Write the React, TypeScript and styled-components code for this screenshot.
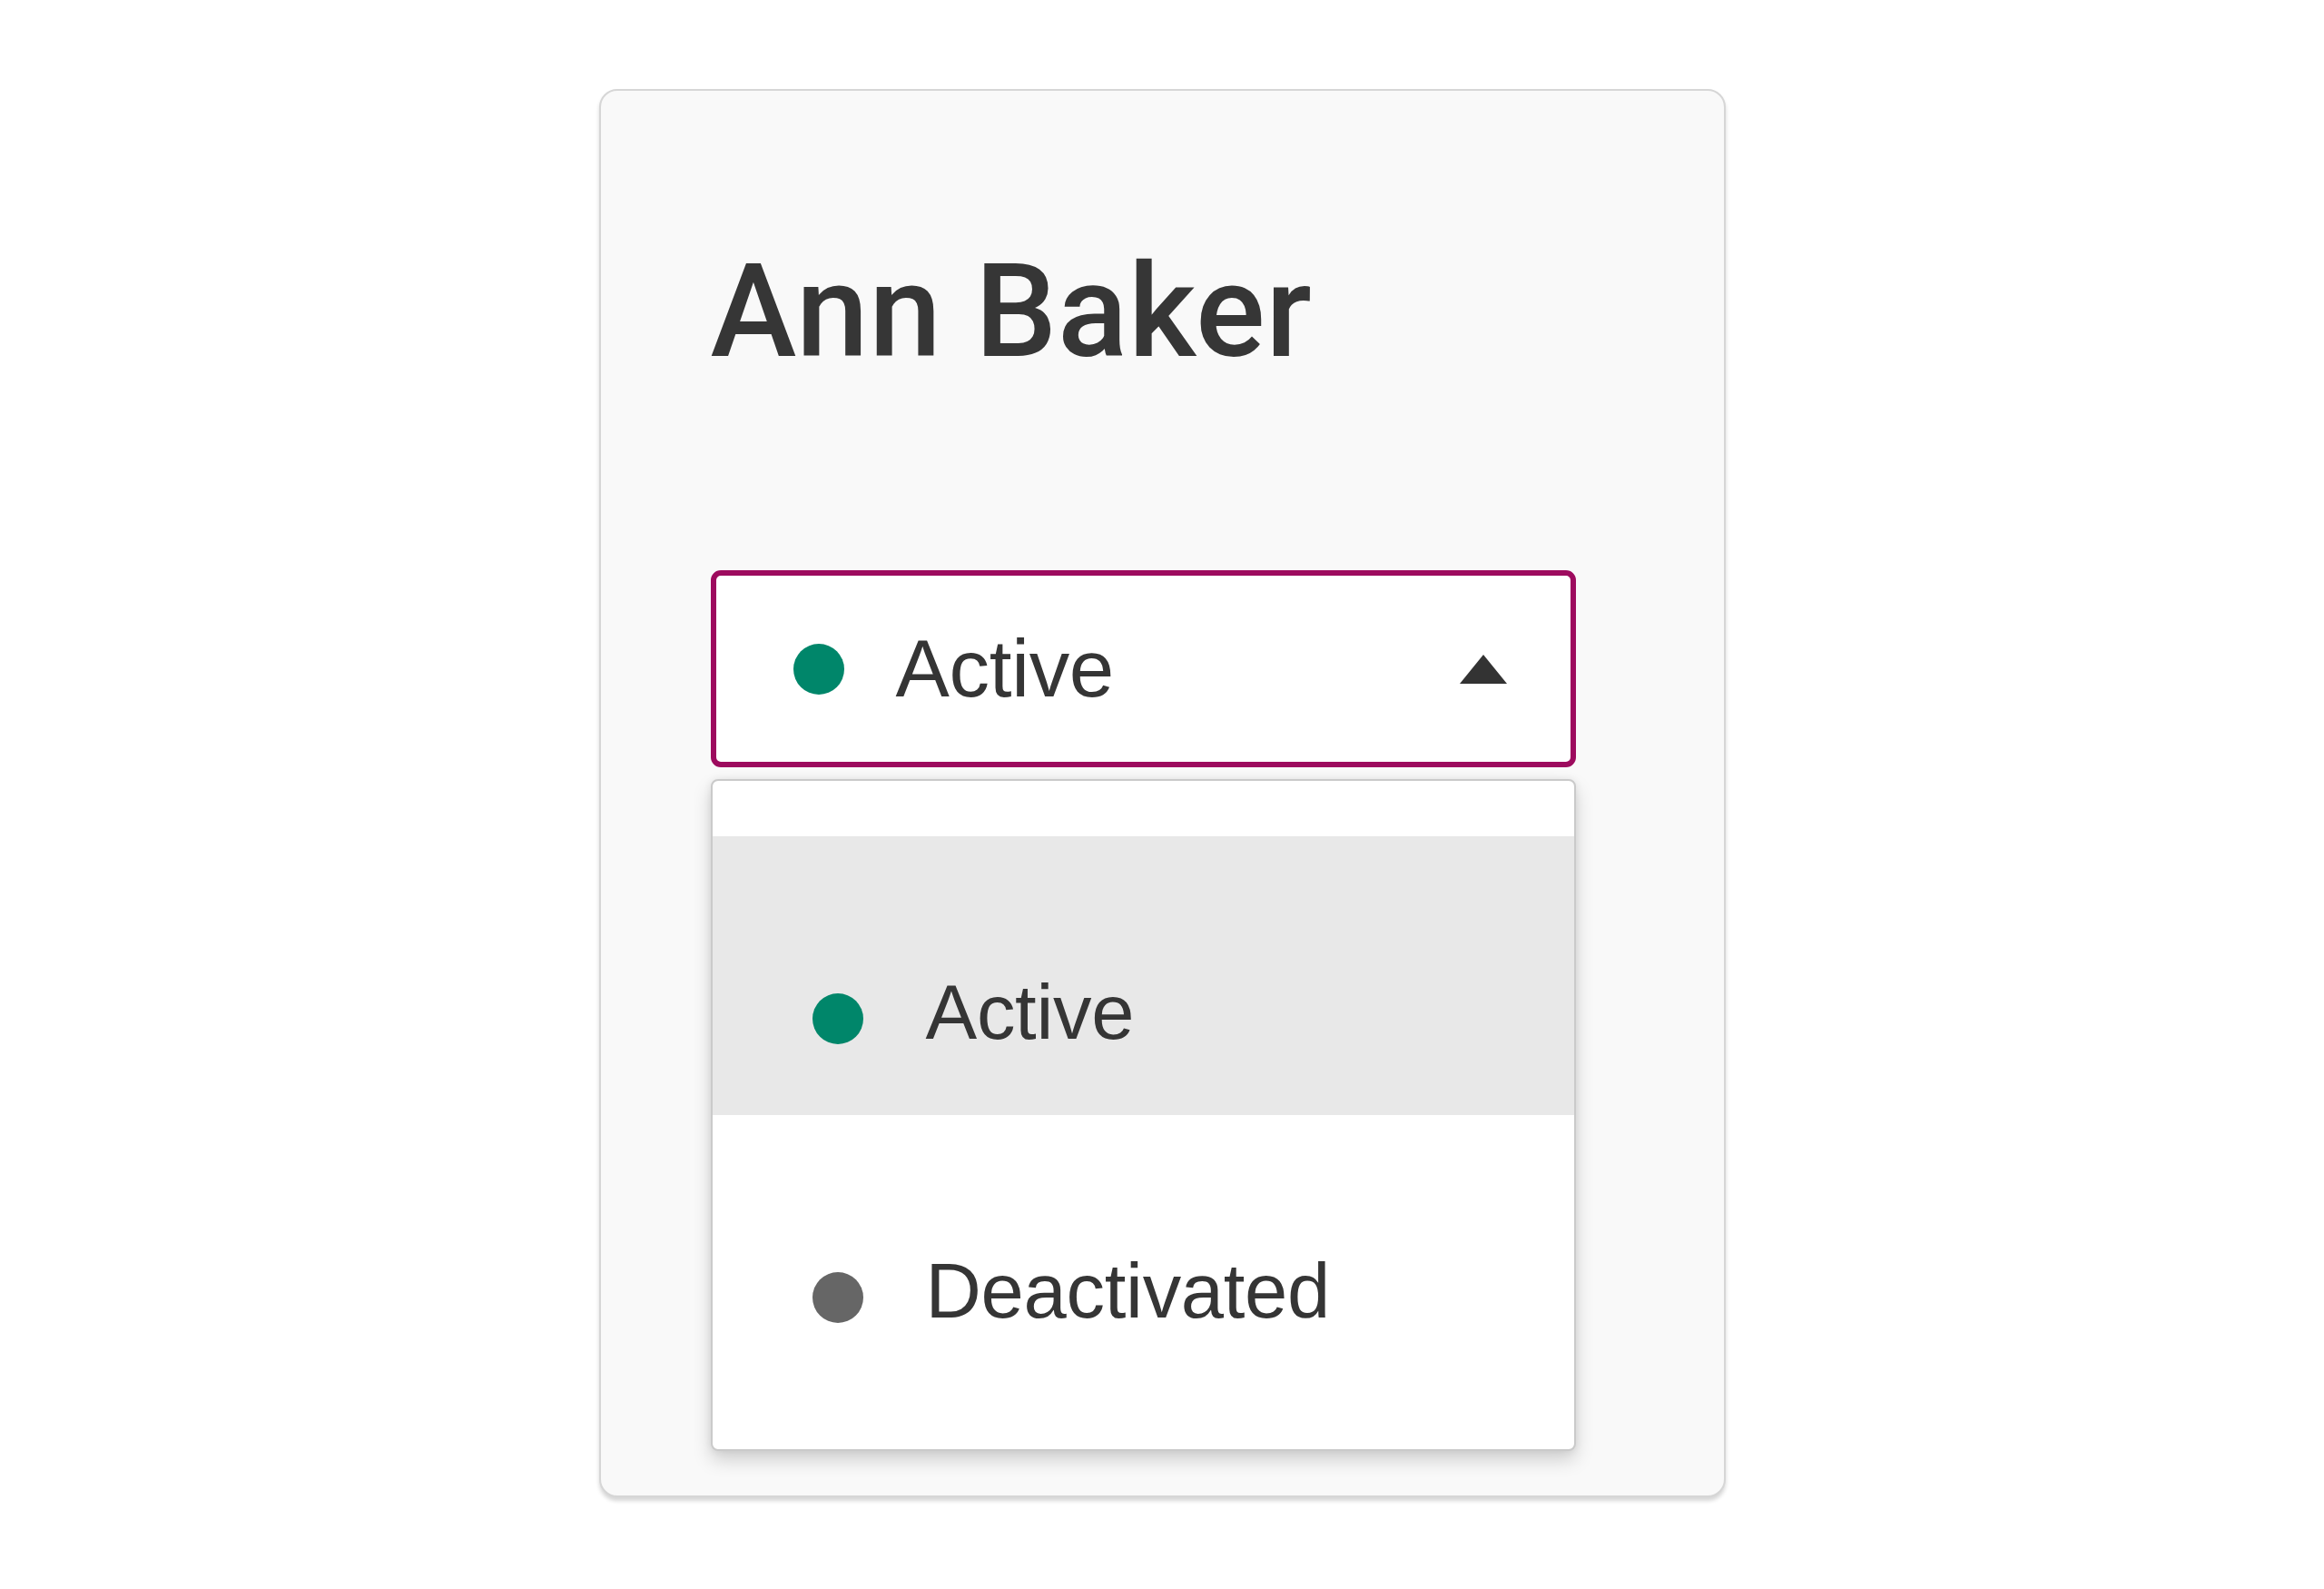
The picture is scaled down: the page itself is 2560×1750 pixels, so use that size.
import styled, { createGlobalStyle } from "styled-components";

const GlobalStyle = createGlobalStyle`
  html, body {
    margin: 0;
    padding: 0;
    background: #ffffff;
  }
  body {
    font-family: "Liberation Sans", Arial, sans-serif;
    color: #333333;
  }
`;

const Page = styled.div`
  display: flex;
  justify-content: center;
  padding-top: 98px;
  min-height: 1750px;
  box-sizing: border-box;
`;

const Card = styled.div`
  width: 1241px;
  height: 1551px;
  box-sizing: border-box;
  padding: 172px 0 0 121px;
  background: #f9f9f9;
  border: 2px solid #d6d6d6;
  border-radius: 20px;
  box-shadow: 0 4px 4px rgba(0, 0, 0, 0.16);
`;

const Name = styled.h1`
  margin: 0;
  font-family: Roboto, "Liberation Sans", sans-serif;
  font-weight: 500;
  font-size: 143px;
  line-height: 1;
  color: #363636;
  letter-spacing: 0.8px;
`;

const Select = styled.button`
  display: flex;
  align-items: center;
  width: 953px;
  height: 217px;
  margin-top: 213px;
  padding: 0 70px 0 85px;
  box-sizing: border-box;
  background: #ffffff;
  border: 6px solid #9d0b5e;
  border-radius: 11px;
  font: inherit;
  cursor: pointer;
`;

const Dot = styled.span<{ $color: string; $shift?: number }>`
  flex: none;
  width: 56px;
  height: 56px;
  border-radius: 50%;
  background: ${(p) => p.$color};
  margin-top: ${(p) => p.$shift ?? 0}px;
`;

const Label = styled.span<{ $size: number; $gap: number }>`
  flex: 1;
  margin-left: ${(p) => p.$gap}px;
  font-family: "Liberation Sans", Arial, sans-serif;
  font-size: ${(p) => p.$size}px;
  line-height: 1;
  color: #353535;
  text-align: left;
  letter-spacing: -0.3px;
`;

const Caret = styled.svg`
  flex: none;
  width: 52px;
  height: 32px;
`;

const Menu = styled.ul`
  list-style: none;
  margin: 13px 0 0;
  padding: 61px 0;
  width: 953px;
  box-sizing: border-box;
  background: #ffffff;
  border: 2px solid #cacaca;
  border-radius: 8px;
  box-shadow: 0 10px 20px rgba(0, 0, 0, 0.17), 0 0 8px rgba(0, 0, 0, 0.07);
`;

const Option = styled.li<{ $highlighted?: boolean }>`
  display: flex;
  align-items: center;
  height: 307px;
  box-sizing: border-box;
  padding: 80px 0 0 110px;
  background: ${(p) => (p.$highlighted ? "#e8e8e8" : "transparent")};
`;

const statuses = [
  { label: "Active", color: "#00866a" },
  { label: "Deactivated", color: "#666666" },
];

export default function App() {
  return (
    <>
      <GlobalStyle />
      <Page>
        <Card>
          <Name>Ann Baker</Name>
          <Select type="button">
            <Dot $color="#00866a" />
            <Label $size={89} $gap={57}>
              Active
            </Label>
            <Caret viewBox="0 0 52 32">
              <polygon points="26,0 52,32 0,32" fill="#333333" />
            </Caret>
          </Select>
          <Menu>
            {statuses.map((s, i) => (
              <Option key={s.label} $highlighted={i === 0}>
                <Dot $color={s.color} $shift={14} />
                <Label $size={85} $gap={69}>
                  {s.label}
                </Label>
              </Option>
            ))}
          </Menu>
        </Card>
      </Page>
    </>
  );
}
